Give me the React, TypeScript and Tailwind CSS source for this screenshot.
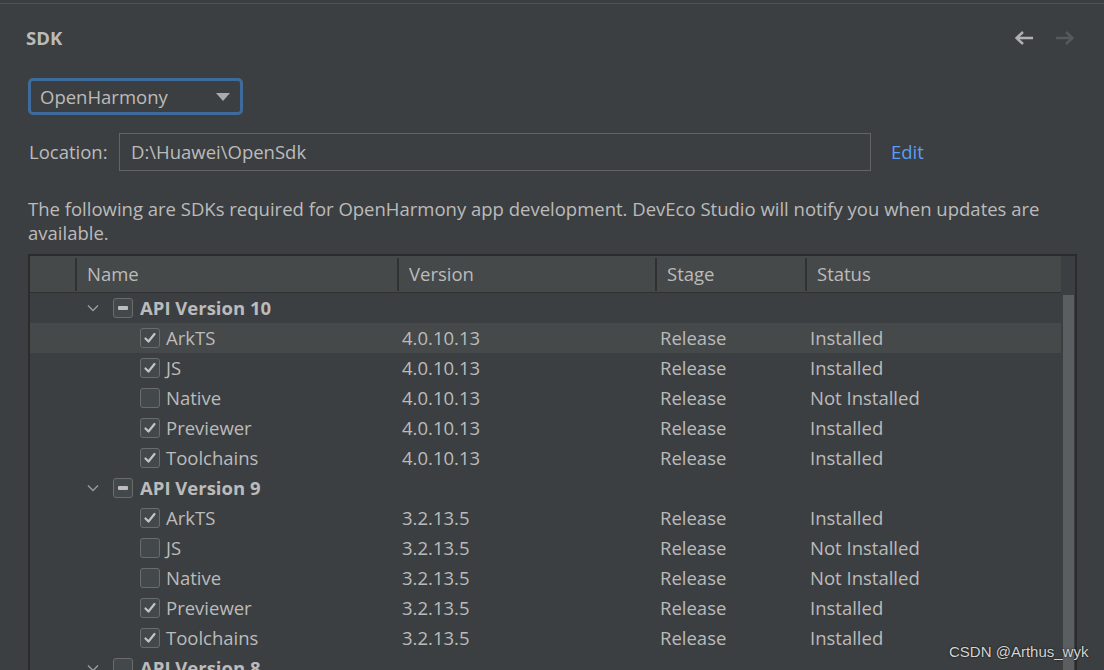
import React from 'react';

type Row = { name: string; version?: string; stage?: string; status?: string; checked?: boolean; group?: boolean; partial?: boolean; hover?: boolean };

const rows: Row[] = [
  { name: 'API Version 10', group: true, partial: true },
  { name: 'ArkTS', version: '4.0.10.13', stage: 'Release', status: 'Installed', checked: true, hover: true },
  { name: 'JS', version: '4.0.10.13', stage: 'Release', status: 'Installed', checked: true },
  { name: 'Native', version: '4.0.10.13', stage: 'Release', status: 'Not Installed' },
  { name: 'Previewer', version: '4.0.10.13', stage: 'Release', status: 'Installed', checked: true },
  { name: 'Toolchains', version: '4.0.10.13', stage: 'Release', status: 'Installed', checked: true },
  { name: 'API Version 9', group: true, partial: true },
  { name: 'ArkTS', version: '3.2.13.5', stage: 'Release', status: 'Installed', checked: true },
  { name: 'JS', version: '3.2.13.5', stage: 'Release', status: 'Not Installed' },
  { name: 'Native', version: '3.2.13.5', stage: 'Release', status: 'Not Installed' },
  { name: 'Previewer', version: '3.2.13.5', stage: 'Release', status: 'Installed', checked: true },
  { name: 'Toolchains', version: '3.2.13.5', stage: 'Release', status: 'Installed', checked: true },
  { name: 'API Version 8', group: true },
];

function CheckBox({ checked, partial }: { checked?: boolean; partial?: boolean }) {
  return (
    <span className="w-[20px] h-[20px] shrink-0 rounded-[3px] border border-[#6b6b6b] bg-[#43494a] flex items-center justify-center">
      {checked && (
        <svg width="14" height="14" viewBox="0 0 14 14" fill="none">
          <path d="M2.5 7.5L5.5 10.5L11.5 3" stroke="#c4c4c4" strokeWidth="2.2" strokeLinecap="round" strokeLinejoin="round" />
        </svg>
      )}
      {partial && <span className="w-[10px] h-[4px] rounded-[1px] bg-[#bdbdbd]" />}
    </span>
  );
}

function Chevron() {
  return (
    <svg width="12" height="8" viewBox="0 0 12 8" fill="none">
      <path d="M1 1.5L6 6.5L11 1.5" stroke="#9a9c9e" strokeWidth="1.4" />
    </svg>
  );
}

function Arrow({ dir, color }: { dir: 'left' | 'right'; color: string }) {
  return (
    <svg width="20" height="16" viewBox="0 0 20 16" fill="none" className={dir === 'right' ? 'rotate-180' : ''}>
      <path d="M19 8H3M9 2L2.5 8L9 14" stroke={color} strokeWidth="2.4" />
    </svg>
  );
}

export default function App() {
  return (
    <div
      className="relative w-[1104px] h-[670px] overflow-hidden bg-[#3c3f41] text-[#bbbbbb] text-[18.5px]"
      style={{ fontFamily: '"Open Sans", "Noto Sans", sans-serif' }}
    >
      <div className="h-[3px]" />
      <div className="h-px bg-[#505356]" />

      {/* Title */}
      <div className="mt-[20px] h-[28px] flex items-center justify-between pl-[26px] pr-[29px]">
        <h1 className="text-[18.5px] font-bold text-[#bbbbbb]">SDK</h1>
        <div className="flex items-center gap-[21px]">
          <Arrow dir="left" color="#afb1b3" />
          <Arrow dir="right" color="#56595b" />
        </div>
      </div>

      {/* Platform select */}
      <div className="mt-[26px] ml-[28px] w-[215px] h-[37px] rounded-[5px] border-[3px] border-[#3e6b9c] flex items-center justify-between pl-[9px] pr-[10px]">
        <span>OpenHarmony</span>
        <svg width="14" height="8" viewBox="0 0 14 8">
          <path d="M0 0H14L7 8Z" fill="#a9abad" />
        </svg>
      </div>

      {/* Location */}
      <div className="mt-[18px] flex items-center h-[38px] pl-[29px]">
        <span className="w-[90px]">Location:</span>
        <div className="w-[752px] h-[38px] border border-[#646464] flex items-center pl-[11px]">D:\Huawei\OpenSdk</div>
        <span className="ml-[20px] text-[#589df6]">Edit</span>
      </div>

      {/* Description */}
      <p className="mt-[26px] pl-[28px] pr-[28px] leading-[24px]">
        The following are SDKs required for OpenHarmony app development. DevEco Studio will notify you when updates are available.
      </p>

      {/* Table */}
      <div className="mt-[9px] ml-[28px] w-[1049px] border-t-2 border-l-2 border-r-2 border-[#2b2b2b] flex">
        <div className="flex-1">
          <div className="h-[37px] bg-[#45494a] border-b border-[#2f3133] flex items-center">
            <div className="w-[45px] h-full" />
            {[
              ['Name', 'w-[322px]'],
              ['Version', 'w-[258px]'],
              ['Stage', 'w-[150px]'],
              ['Status', 'flex-1'],
            ].map(([label, w]) => (
              <div key={label} className={`${w} h-[33px] border-l-2 border-[#2f3133] flex items-center pl-[10px]`}>
                {label}
              </div>
            ))}
          </div>
          {rows.map((r, i) => (
            <div key={i} className={`h-[30px] flex items-center ${r.hover ? 'bg-[#45494a]' : ''}`}>
              {r.group ? (
                <div className="w-[369px] flex items-center pl-[57px]">
                  <Chevron />
                  <span className="ml-[14px]"><CheckBox partial={r.partial} /></span>
                  <span className="ml-[7px] font-bold">{r.name}</span>
                </div>
              ) : (
                <div className="w-[369px] flex items-center pl-[110px]">
                  <CheckBox checked={r.checked} />
                  <span className="ml-[6px]">{r.name}</span>
                </div>
              )}
              <div className="w-[258px] pl-[3px]">{r.version}</div>
              <div className="w-[150px] pl-[3px]">{r.stage}</div>
              <div className="flex-1 pl-[3px]">{r.status}</div>
            </div>
          ))}
        </div>
        <div className="w-[14px] shrink-0 flex flex-col">
          <div className="h-[39px]" />
          <div className="ml-[2px] w-[11px] flex-1 bg-[#5b5e60]" />
        </div>
      </div>

      <div
        className="absolute left-[949px] top-[641px] text-[15px] text-[#d4d4d4] [text-shadow:0_0_2px_#000]"
        style={{ fontFamily: '"Liberation Sans", Arial, sans-serif' }}
      >
        CSDN @Arthus_wyk
      </div>
    </div>
  );
}
